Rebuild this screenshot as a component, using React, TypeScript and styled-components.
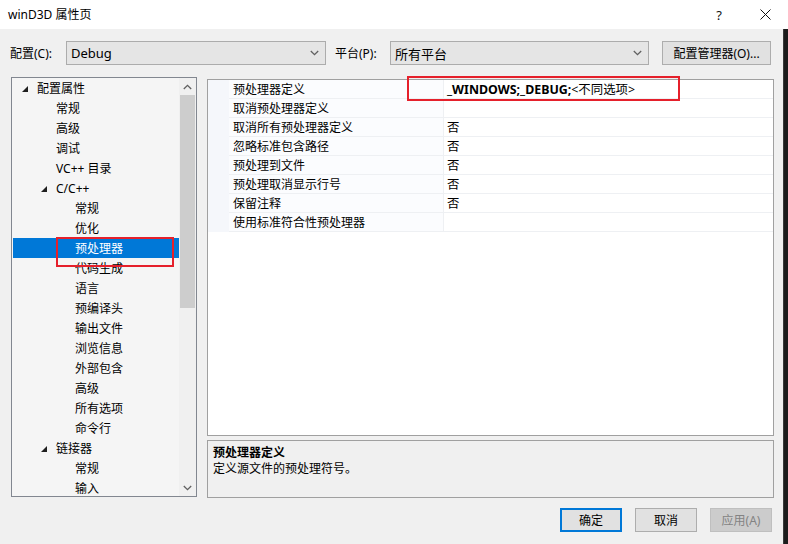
import React from "react";
import styled, { createGlobalStyle } from "styled-components";

const FONT = `"Noto Sans", "Noto Sans CJK SC", sans-serif`;

const GlobalStyle = createGlobalStyle`
	html, body {
		margin: 0;
		padding: 0;
		width: 788px;
		height: 544px;
		overflow: hidden;
		background: #f0f0f0;
		font-family: ${FONT};
		font-size: 12px;
		color: #000;
	}
	* { box-sizing: border-box; }
`;

const Window = styled.div`
	position: relative;
	width: 788px;
	height: 544px;
	display: flex;
	flex-direction: column;
`;

const TitleBar = styled.div`
	height: 29px;
	background: #fff;
	display: flex;
	align-items: center;
	padding-left: 8px;
	font-size: 12px;
`;

const Title = styled.span`
	flex: 1;
	padding-bottom: 2px;
`;

const CaptionButton = styled.div`
	width: 46px;
	height: 29px;
	display: flex;
	align-items: center;
	justify-content: center;
	font-size: 13px;
	color: #111;
`;

const Body = styled.div`
	flex: 1;
	display: flex;
`;

const Content = styled.div`
	flex: 1;
	display: flex;
	flex-direction: column;
`;

const DarkEdge = styled.div`
	width: 5px;
	background: #1c1c1c;
	border-left: 1px solid #3a3a3a;
`;

const ConfigRow = styled.div`
	display: flex;
	align-items: center;
	height: 25px;
	margin-top: 11px;
	padding-left: 10px;
`;

const Label = styled.span<{ $w: number; $pad?: number }>`
	width: ${p => p.$w}px;
	padding-left: ${p => p.$pad ?? 0}px;
	white-space: nowrap;
`;

const Combo = styled.div<{ $w: number }>`
	width: ${p => p.$w}px;
	height: 24px;
	margin-top: 1px;
	background: #e5e5e5;
	border: 1px solid #acacac;
	display: flex;
	align-items: center;
	justify-content: space-between;
	padding: 0 6px 0 4px;
	font-size: 13px;
`;

const PushButton = styled.div<{ $primary?: boolean; $disabled?: boolean }>`
	height: 24px;
	display: flex;
	align-items: center;
	justify-content: center;
	background: ${p => (p.$disabled ? "#cccccc" : "#e1e1e1")};
	border: ${p => (p.$primary ? "2px solid #0078d7" : p.$disabled ? "1px solid #bfbfbf" : "1px solid #adadad")};
	color: ${p => (p.$disabled ? "#838383" : "#000")};
	white-space: nowrap;
`;

const ManagerButton = styled(PushButton)`
	width: 109px;
	margin-left: 13px;
`;

const Main = styled.div`
	display: flex;
	align-items: flex-start;
	margin-top: 12px;
	padding-left: 11px;
`;

const Tree = styled.div`
	width: 186px;
	height: 420px;
	border: 1px solid #828790;
	background: #f5f5f5;
	display: flex;
`;

const TreeList = styled.div`
	flex: 1;
	overflow: hidden;
	padding: 0 0 0 1px;
`;

const TreeRow = styled.div<{ $level: number; $selected?: boolean }>`
	height: 20px;
	display: flex;
	align-items: center;
	padding-left: ${p => 24 + p.$level * 19}px;
	background: ${p => (p.$selected ? "#0078d7" : "transparent")};
	color: ${p => (p.$selected ? "#fff" : "#000")};
	position: relative;
	white-space: nowrap;
`;

const Expander = styled.svg`
	position: absolute;
	margin-left: -15px;
	top: 8px;
`;

const ScrollBar = styled.div`
	width: 17px;
	background: #f0f0f0;
	display: flex;
	flex-direction: column;
	align-items: center;
`;

const ScrollArrow = styled.div`
	height: 17px;
	width: 17px;
	display: flex;
	align-items: center;
	justify-content: center;
`;

const ScrollTrack = styled.div`
	flex: 1;
	width: 15px;
`;

const ScrollThumb = styled.div`
	width: 15px;
	height: 213px;
	background: #cdcdcd;
`;

const RightColumn = styled.div`
	margin-left: 10px;
	margin-top: 2px;
	width: 567px;
	display: flex;
	flex-direction: column;
	gap: 4px;
`;

const Grid = styled.div`
	height: 357px;
	background: #fff;
	border: 1px solid #a0a0a0;
`;

const GridRow = styled.div`
	height: 19px;
	display: flex;
`;

const Gutter = styled.div`
	width: 21px;
	background: #f5f7fb;
`;

const NameCell = styled.div`
	width: 215px;
	padding-left: 4px;
	display: flex;
	align-items: center;
	border-bottom: 1px solid #eef0f3;
	border-right: 1px solid #eef0f3;
	background: #fbfcfe;
	white-space: nowrap;
`;

const ValueCell = styled.div`
	flex: 1;
	padding-left: 3px;
	display: flex;
	align-items: center;
	border-bottom: 1px solid #eef0f3;
	white-space: nowrap;
	font-size: 12.4px;
`;

const Bold = styled.b`
	font-weight: 700;
`;

const Description = styled.div`
	height: 58px;
	background: #f0f0f0;
	border: 1px solid #a0a0a0;
	padding: 4px 0 0 5px;
	line-height: 16px;
`;

const DescTitle = styled.div`
	font-weight: 700;
`;

const Footer = styled.div`
	display: flex;
	justify-content: flex-end;
	gap: 13px;
	margin-top: 10px;
	padding-right: 11px;
`;

const DialogButton = styled(PushButton)`
	width: 62px;
`;

const Highlight = styled.div`
	position: absolute;
	border: 2px solid #e5202b;
	pointer-events: none;
`;

const Chevron = ({ up = false, color = "#606060" }: { up?: boolean; color?: string }) => (
	<svg width="9" height="6" viewBox="0 0 9 6">
		<path d={up ? "M0.8 5 L4.5 1.3 L8.2 5" : "M0.8 1 L4.5 4.7 L8.2 1"} fill="none" stroke={color} strokeWidth="1.3" />
	</svg>
);

type Node = { label: string; level: number; expanded?: boolean; selected?: boolean };

const treeNodes: Node[] = [
	{ label: "配置属性", level: 0, expanded: true },
	{ label: "常规", level: 1 },
	{ label: "高级", level: 1 },
	{ label: "调试", level: 1 },
	{ label: "VC++ 目录", level: 1 },
	{ label: "C/C++", level: 1, expanded: true },
	{ label: "常规", level: 2 },
	{ label: "优化", level: 2 },
	{ label: "预处理器", level: 2, selected: true },
	{ label: "代码生成", level: 2 },
	{ label: "语言", level: 2 },
	{ label: "预编译头", level: 2 },
	{ label: "输出文件", level: 2 },
	{ label: "浏览信息", level: 2 },
	{ label: "外部包含", level: 2 },
	{ label: "高级", level: 2 },
	{ label: "所有选项", level: 2 },
	{ label: "命令行", level: 2 },
	{ label: "链接器", level: 1, expanded: true },
	{ label: "常规", level: 2 },
	{ label: "输入", level: 2 },
];

const props: { name: string; value?: React.ReactNode }[] = [
	{ name: "预处理器定义", value: <><Bold>_WINDOWS;_DEBUG;</Bold>&lt;不同选项&gt;</> },
	{ name: "取消预处理器定义" },
	{ name: "取消所有预处理器定义", value: "否" },
	{ name: "忽略标准包含路径", value: "否" },
	{ name: "预处理到文件", value: "否" },
	{ name: "预处理取消显示行号", value: "否" },
	{ name: "保留注释", value: "否" },
	{ name: "使用标准符合性预处理器" },
];

export default function App() {
	return (
		<>
			<GlobalStyle />
			<Window>
				<TitleBar>
					<Title>winD3D 属性页</Title>
					<CaptionButton>?</CaptionButton>
					<CaptionButton>
						<svg width="11" height="11" viewBox="0 0 11 11">
							<path d="M0.5 0.5 L10.5 10.5 M10.5 0.5 L0.5 10.5" stroke="#111" strokeWidth="1" />
						</svg>
					</CaptionButton>
				</TitleBar>
				<Body>
					<Content>
						<ConfigRow>
							<Label $w={56}>配置(C):</Label>
							<Combo $w={260}>
								<span>Debug</span>
								<Chevron />
							</Combo>
							<Label $w={64} $pad={9}>平台(P):</Label>
							<Combo $w={259}>
								<span>所有平台</span>
								<Chevron />
							</Combo>
							<ManagerButton>配置管理器(O)...</ManagerButton>
						</ConfigRow>
						<Main>
							<Tree>
								<TreeList>
									{treeNodes.map((n, i) => (
										<TreeRow key={i} $level={n.level} $selected={n.selected}>
											{n.expanded && (
												<Expander width="6" height="6" viewBox="0 0 6 6">
													<polygon points="6,0 6,6 0,6" fill="#1e1e1e" />
												</Expander>
											)}
											{n.label}
										</TreeRow>
									))}
								</TreeList>
								<ScrollBar>
									<ScrollArrow><Chevron up /></ScrollArrow>
									<ScrollTrack>
										<ScrollThumb />
									</ScrollTrack>
									<ScrollArrow><Chevron /></ScrollArrow>
								</ScrollBar>
							</Tree>
							<RightColumn>
								<Grid>
									{props.map((p, i) => (
										<GridRow key={i}>
											<Gutter />
											<NameCell>{p.name}</NameCell>
											<ValueCell>{p.value}</ValueCell>
										</GridRow>
									))}
								</Grid>
								<Description>
									<DescTitle>预处理器定义</DescTitle>
									<div>定义源文件的预处理符号。</div>
								</Description>
							</RightColumn>
						</Main>
						<Footer>
							<DialogButton $primary>确定</DialogButton>
							<DialogButton>取消</DialogButton>
							<DialogButton $disabled>应用(A)</DialogButton>
						</Footer>
					</Content>
					<DarkEdge />
				</Body>
				<Highlight style={{ left: 407, top: 76, width: 273, height: 25 }} />
				<Highlight style={{ left: 56, top: 237, width: 118, height: 30 }} />
			</Window>
		</>
	);
}
